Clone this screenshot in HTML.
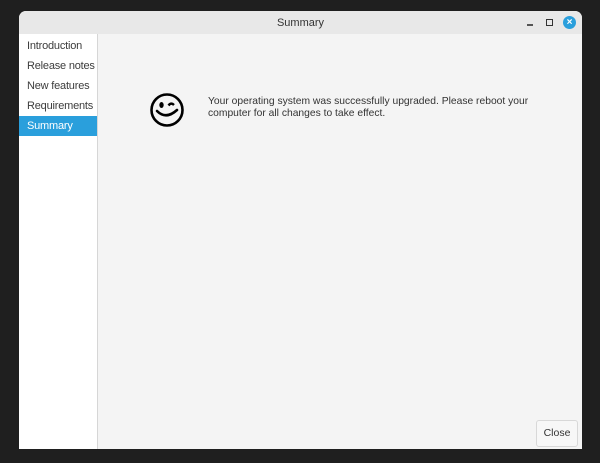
<!DOCTYPE html>
<html><head><style>
body{margin:0;width:600px;height:463px;background:#1f1f1f;position:relative;overflow:hidden;font-family:"Liberation Sans","DejaVu Sans",sans-serif;}
.win{position:absolute;left:19px;top:11px;width:563px;height:438px;background:#f4f4f4;border-radius:7px 7px 0 0;overflow:hidden;}
.title{position:absolute;left:0;top:0;width:100%;height:23px;background:#e8e8e8;text-align:center;font-size:11px;line-height:24px;color:#333;}
.side{position:absolute;left:0;top:23px;width:78px;height:415px;background:#fff;border-right:1px solid #d6d6d6;}
.side div{height:20px;line-height:20px;padding-left:8px;font-size:11px;color:#3c3c3c;white-space:nowrap;letter-spacing:-0.2px}
.side .sel{background:#2a9fdc;color:#fff;}
.msg{position:absolute;left:189px;top:85px;font-size:10.3px;line-height:12px;color:#333;}
.btn{position:absolute;left:517px;top:409px;width:40px;height:25px;border:1px solid #d8d8d8;border-radius:3px;background:#f7f7f7;font-size:10.5px;line-height:25px;text-align:center;color:#333;}
</style></head><body>
<div class="win">
<div class="title">Summary</div>
<div style="position:absolute;left:508px;top:13px;width:6px;height:2px;background:#555"></div>
<div style="position:absolute;left:527px;top:8px;width:5px;height:5px;border:1px solid #333"></div>
<div style="position:absolute;left:544px;top:5px;width:13px;height:13px;border-radius:50%;background:#2a9fdc;color:#fff;font-size:10px;line-height:13px;text-align:center;font-weight:bold">×</div>
<div class="side">
<div style="margin-top:2px">Introduction</div><div>Release notes</div><div>New features</div><div>Requirements</div><div class="sel">Summary</div>
</div>
<svg style="position:absolute;left:130px;top:81px" width="36" height="36" viewBox="0 0 36 36">
<circle cx="18" cy="18" r="15.5" fill="none" stroke="#000" stroke-width="2.6"/>
<ellipse cx="12.5" cy="13" rx="2.2" ry="3" fill="#000"/>
<path d="M19.5 13.5 Q22 10 25 13" fill="none" stroke="#000" stroke-width="2.4"/>
<path d="M8 19 Q17 28 28 18" fill="none" stroke="#000" stroke-width="2.6" stroke-linecap="round"/>
</svg>
<div class="msg">Your operating system was successfully upgraded. Please reboot your<br>computer for all changes to take effect.</div>
<div class="btn">Close</div>
</div>
</body></html>
